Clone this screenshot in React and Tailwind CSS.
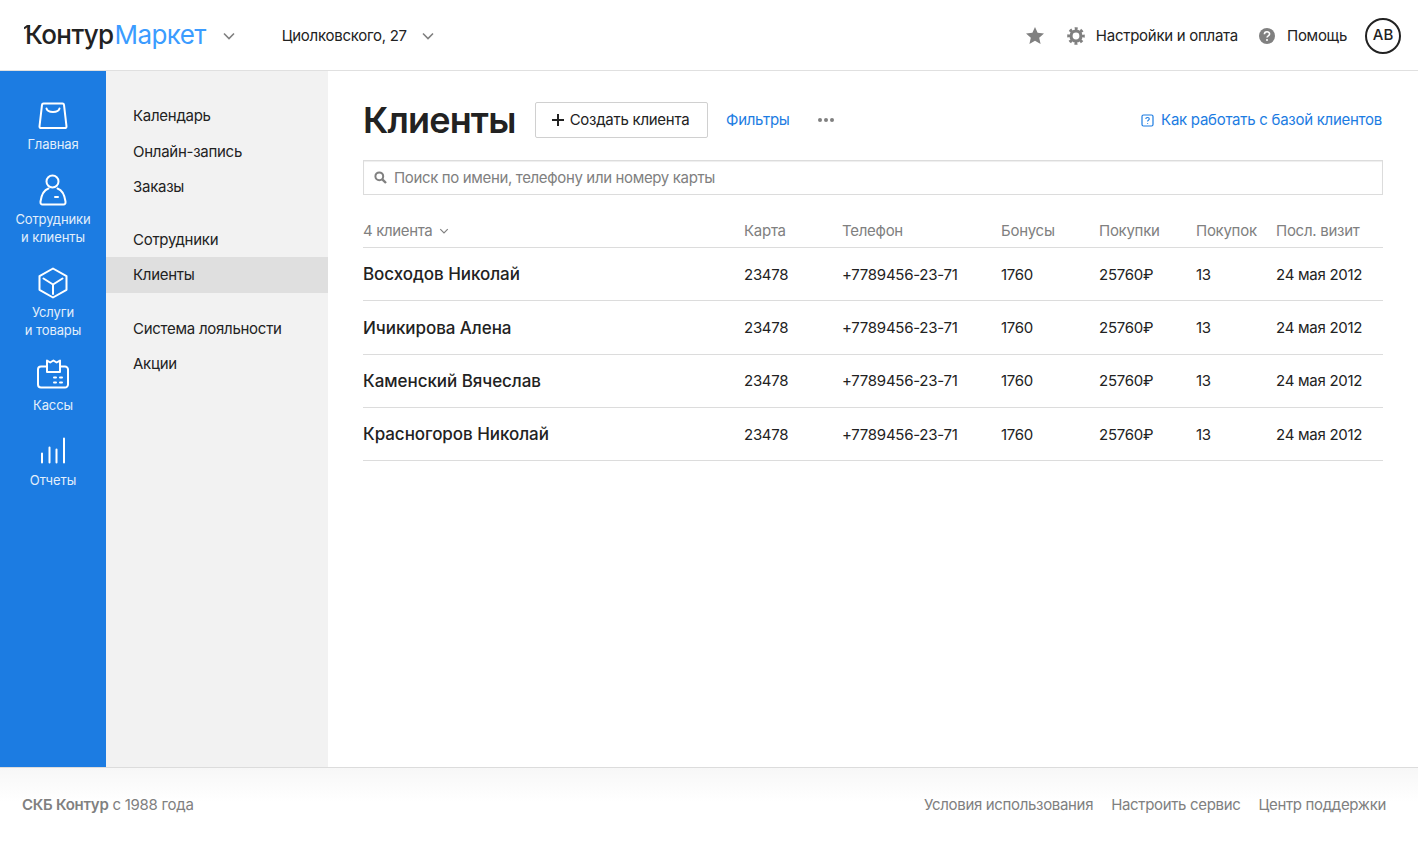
import React from "react";

const clients = ["Восходов Николай", "Ичикирова Алена", "Каменский Вячеслав", "Красногоров Николай"];
const cols = "grid grid-cols-[381px_98px_159px_98px_97px_80px_1fr]";

function Chev({ className }) {
  return (
    <svg className={className} width="12" height="8" viewBox="0 0 12 8" fill="none">
      <path d="M1 1.500l5 5 5-5" stroke="#808080" strokeWidth="1.600" />
    </svg>
  );
}

function NavItem({ icon, lines, h, gap }) {
  return (
    <div className={`flex flex-col items-center ${h}`}>
      {icon}
      <div className={`${gap} text-center text-[13px] leading-[18px] tracking-[-0.1px] text-[#e3effb]`}>
        {lines.map((l) => (
          <div key={l}>{l}</div>
        ))}
      </div>
    </div>
  );
}

const iconStroke = { fill: "none", stroke: "white", strokeWidth: 2, strokeLinejoin: "round", strokeLinecap: "round" };

const IconBag = (
  <svg width="30" height="28" viewBox="0 0 30 28" {...iconStroke}>
    <path d="M5.500 1.500h19a1.500 1.500 0 0 1 1.500 1.300l2.500 21.500a1.500 1.500 0 0 1-1.500 1.700H3a1.500 1.500 0 0 1-1.500-1.700L4 2.800a1.500 1.500 0 0 1 1.500-1.300z" />
    <path d="M8.500 6.500c1 4.500 12 4.500 13 0" />
  </svg>
);
const IconPerson = (
  <svg width="28" height="32" viewBox="0 0 28 32" {...iconStroke}>
    <circle cx="13.500" cy="7.500" r="6" />
    <path d="M9.500 14.500C5 16 2.500 20.500 1.500 27.500c-.2 2 .5 3 2 3h21c1.500 0 2.200-1 2-3-1-7-3.500-11.500-8-13" />
    <path d="M16 23h3" />
  </svg>
);
const IconBox = (
  <svg width="30" height="32" viewBox="0 0 30 32" {...iconStroke}>
    <path d="M15 1.500l13.500 7.700v13.600L15 30.500 1.500 22.800V9.200z" />
    <path d="M5.500 11.500l9.500 6 9.500-6M15 17.500v9.500" />
  </svg>
);
const IconCash = (
  <svg width="32" height="30" viewBox="0 0 32 30" {...iconStroke}>
    <path d="M10 7.500H4a3 3 0 0 0-3 3v15a3 3 0 0 0 3 3h24a3 3 0 0 0 3-3v-15a3 3 0 0 0-3-3h-5" />
    <path d="M10 13V1.500l3.200 2 3.200-2 3.200 2 3.400-2V13z" />
    <path d="M17 18.500h2M23 18.500h2M17 23.500h2M23 23.500h2" />
  </svg>
);
const IconBars = (
  <svg width="26" height="27" viewBox="0 0 26 27" {...iconStroke}>
    <path d="M2 25.500v-9M9.500 25.500v-15M16.500 25.500v-13M24 25.500v-24" />
  </svg>
);

export default function App() {
  return (
    <div className="min-h-[842px] bg-white font-['Inter',sans-serif] text-[15px] tracking-[-0.27px] text-[#222]">
      <header className="flex h-[71px] items-center border-b border-[#e0e0e0] pl-6 pr-[17px] pt-[1px]">
        <div className="-mt-[2px] flex items-baseline text-[26px] font-medium leading-none tracking-[-0.6px]">
          <span className="relative pl-[1px] text-[#222]">
            <svg className="absolute left-0 top-[3px]" width="6" height="5" viewBox="0 0 6 5">
              <path d="M0 3.500L3 1.200h3" stroke="#222" strokeWidth="2" fill="none" />
            </svg>
            Контур
          </span>
          <span className="ml-[1px] font-normal text-[#3b9cff]">Маркет</span>
        </div>
        <Chev className="ml-[17px]" />
        <span className="ml-[47px] pt-[2px]">Циолковского, 27</span>
        <Chev className="ml-[15px]" />
        <div className="ml-auto flex items-center">
          <svg width="18" height="17" viewBox="0 0 18 17">
            <path d="M9 0l2.600 5.800 6.400.7-4.800 4.200 1.400 6.300L9 13.800 3.400 17l1.400-6.300L0 6.500l6.400-.7z" fill="#808080" />
          </svg>
          <svg className="ml-[23px]" width="18" height="18" viewBox="0 0 18 18" fill="none">
            <circle cx="9" cy="9" r="5" stroke="#808080" strokeWidth="3.200" />
            <circle cx="9" cy="9" r="7.300" stroke="#808080" strokeWidth="3" strokeDasharray="2.900 2.830" strokeDashoffset="1.450" />
          </svg>
          <span className="ml-[11px] pt-[2px]">Настройки и оплата</span>
          <svg className="ml-[21px]" width="16" height="16" viewBox="0 0 16 16">
            <circle cx="8" cy="8" r="8" fill="#808080" />
            <path d="M5.400 6.200c0-3.300 5.200-3.300 5.200-.2 0 1.800-2.600 1.800-2.600 3.500" stroke="white" strokeWidth="1.600" fill="none" />
            <circle cx="8" cy="12" r="1" fill="white" />
          </svg>
          <span className="ml-[12px] pt-[2px]">Помощь</span>
          <div className="ml-[18px] flex h-9 w-9 items-center justify-center rounded-full border-2 border-[#222] text-[15px] font-medium tracking-normal">
            АВ
          </div>
        </div>
      </header>

      <div className="flex h-[696px]">
        <aside className="flex w-[106px] shrink-0 flex-col bg-[#1c7ce2] pt-[31px]">
          <NavItem icon={IconBag} lines={["Главная"]} h="h-[72px]" gap="mt-[5px]" />
          <NavItem icon={IconPerson} lines={["Сотрудники", "и клиенты"]} h="h-[93px]" gap="mt-[4px]" />
          <NavItem icon={IconBox} lines={["Услуги", "и товары"]} h="h-[92px]" gap="mt-[4px]" />
          <NavItem icon={IconCash} lines={["Кассы"]} h="h-[78px]" gap="mt-[7px]" />
          <NavItem icon={IconBars} lines={["Отчеты"]} h="h-[73px]" gap="mt-[7px]" />
        </aside>

        <nav className="w-[222px] shrink-0 bg-[#f2f2f2] pt-[27px] leading-[35.500px]">
          {["Календарь", "Онлайн-запись", "Заказы"].map((t) => (
            <div key={t} className="pl-[27px]">{t}</div>
          ))}
          <div className="mt-[17px] pl-[27px]">Сотрудники</div>
          <div className="bg-[#dfdfdf] pl-[27px]">Клиенты</div>
          <div className="mt-[18px] pl-[27px]">Система лояльности</div>
          <div className="pl-[27px]">Акции</div>
        </nav>

        <main className="flex-1 pl-[35px] pr-[35px] pt-[31px]">
          <div className="flex h-9 items-center">
            <h1 className="w-[153px] text-[36px] font-semibold leading-none tracking-[-0.85px]">Клиенты</h1>
            <button className="ml-[19px] flex h-9 w-[173px] items-center justify-center rounded-[2px] border border-[#d0d0d0] bg-white pr-[2px]">
              <svg width="12" height="12" viewBox="0 0 12 12" className="mr-[6px]">
                <path d="M6 0v12M0 6h12" stroke="#222" strokeWidth="2" />
              </svg>
              Создать клиента
            </button>
            <a className="ml-[18px] text-[#1c7ce2]">Фильтры</a>
            <div className="ml-[28px] flex gap-[2px]">
              <i className="h-1 w-1 rounded-full bg-[#808080]" />
              <i className="h-1 w-1 rounded-full bg-[#808080]" />
              <i className="h-1 w-1 rounded-full bg-[#808080]" />
            </div>
            <a className="ml-auto mr-[1px] flex items-center text-[#1c7ce2]">
              <svg width="13" height="13" viewBox="0 0 13 13" fill="none" className="mr-[7px]">
                <rect x="1" y="1" width="11" height="11" rx="1.500" stroke="#1c7ce2" strokeWidth="1.200" />
                <path d="M4.800 5.100c0-2.200 3.500-2.200 3.500 0 0 1.200-1.700 1.200-1.700 2.300M6.600 9v.8" stroke="#1c7ce2" strokeWidth="1.100" />
              </svg>
              Как работать с базой клиентов
            </a>
          </div>

          <div className="mt-[22px] flex h-[35px] items-center border border-[#dcdcdc] pl-[10px] text-[#808080] shadow-[inset_0_1px_1px_#eee]">
            <svg width="13" height="13" viewBox="0 0 13 13" fill="none">
              <circle cx="5.300" cy="5.300" r="3.900" stroke="#808080" strokeWidth="2" />
              <path d="M8.300 8.300l3.700 3.700" stroke="#808080" strokeWidth="2.400" />
            </svg>
            <span className="ml-[7px] pt-[2px] tracking-[-0.35px]">Поиск по имени, телефону или номеру карты</span>
          </div>

          <div className={`${cols} mt-[24px] h-[29px] border-b border-[#dcdcdc] pt-[1px] text-[#808080]`}>
            <div className="flex items-center self-start">
              <span className="tracking-[-0.35px]">4 клиента</span>
              <Chev className="ml-[7px] h-[6px] w-[10px]" />
            </div>
            <div>Карта</div>
            <div>Телефон</div>
            <div>Бонусы</div>
            <div>Покупки</div>
            <div>Покупок</div>
            <div>Посл. визит</div>
          </div>

          {clients.map((name) => (
            <div key={name} className={`${cols} h-[53.250px] items-center border-b border-[#dcdcdc] pt-[2px]`}>
              <div className="text-[17px] font-medium tracking-[-0.05px]">{name}</div>
              <div>23478</div>
              <div>+7789456-23-71</div>
              <div>1760</div>
              <div>25760₽</div>
              <div>13</div>
              <div>24 мая 2012</div>
            </div>
          ))}
        </main>
      </div>

      <footer className="flex h-[75px] items-center justify-between border-t border-[#dcdcdc] bg-gradient-to-b from-[#f7f7f7] to-white to-[45%] pl-[22px] pr-[32px] text-[#808080]">
        <div>
          <b className="font-semibold">СКБ Контур</b> с 1988 года
        </div>
        <div className="flex gap-[18px] tracking-[-0.33px]">
          <span>Условия использования</span>
          <span>Настроить сервис</span>
          <span>Центр поддержки</span>
        </div>
      </footer>
    </div>
  );
}
